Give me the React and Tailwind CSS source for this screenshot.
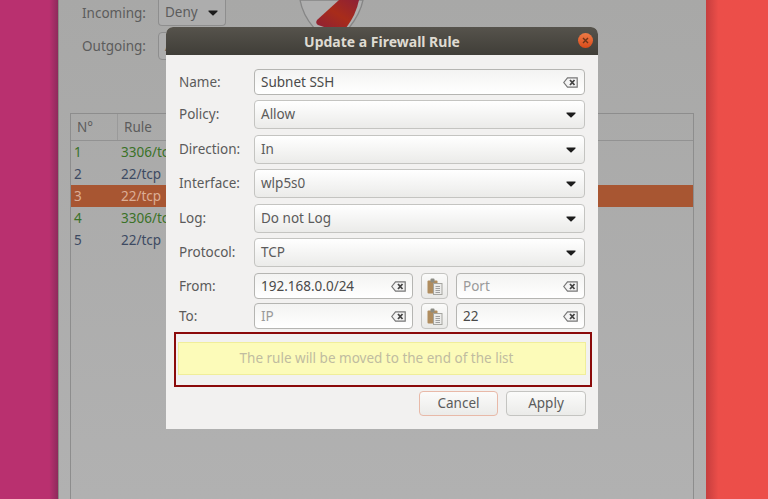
import React from 'react';

const rules = [
  { id: 1, rule: '3306/tcp', color: 'text-[#3a7228]' },
  { id: 2, rule: '22/tcp', color: 'text-[#3d4a62]' },
  { id: 3, rule: '22/tcp', color: 'text-[#dcae96]', active: true },
  { id: 4, rule: '3306/tcp', color: 'text-[#3a7228]' },
  { id: 5, rule: '22/tcp', color: 'text-[#3d4a62]' },
];

const ClearIcon = () => (
  <svg width="15" height="11" viewBox="0 0 15 11" className="shrink-0">
    <path d="M4.5 0.8H14.2V10.2H4.5L0.8 5.5Z" fill="#f4f4f4" stroke="#777" strokeWidth="1.2" />
    <path d="M7 3L11.5 8M11.5 3L7 8" stroke="#444" strokeWidth="1.8" />
  </svg>
);

const Arrow = () => (
  <svg width="10" height="6" viewBox="0 0 10 6" className="shrink-0">
    <path d="M0.5 0.5H9.5V1.5L5 5.8L0.5 1.5Z" fill="#1c1c1c" />
  </svg>
);

const ClipboardIcon = () => (
  <svg width="16" height="17" viewBox="0 0 16 17">
    <rect x="0.5" y="2.5" width="10" height="13" rx="1" fill="#b08d5f" />
    <rect x="3.5" y="0.5" width="4" height="4" rx="1" fill="#8d8d84" />
    <rect x="6.5" y="5.5" width="8.5" height="11" fill="#ececea" stroke="#a5a5a0" />
    <path d="M8.5 8.5H13M8.5 10.5H13M8.5 12.5H13M8.5 14.5H13" stroke="#a0a0a0" />
  </svg>
);

const Label = ({ children }) => (
  <div className="w-[75px] shrink-0 text-[#5b5b5b]">{children}</div>
);

const Entry = ({ value, placeholder, className }) => (
  <div className={`flex h-[26px] items-center justify-between rounded-[4px] border border-[#b5b5b2] bg-gradient-to-b from-[#f3f3f2] to-white pl-[6px] pr-[6px] ${className}`}>
    <span className={value ? 'text-[#4a4a4a]' : 'text-[#9a9a9a]'}>{value || placeholder}</span>
    <ClearIcon />
  </div>
);

const Combo = ({ value }) => (
  <div className="flex h-[29px] flex-1 items-center justify-between rounded-[4px] border border-[#c4c4c1] bg-gradient-to-b from-white to-[#ebebe9] pl-[6px] pr-[8px] text-[#5b5b5b]">
    <span>{value}</span>
    <Arrow />
  </div>
);

const PasteButton = () => (
  <div className="mx-[8px] flex h-[26px] w-[27px] shrink-0 items-center justify-center rounded-[4px] border border-[#c4c4c1] bg-gradient-to-b from-[#fbfbfa] to-[#e9e9e7]">
    <ClipboardIcon />
  </div>
);

const Dialog = () => (
  <div className="absolute left-[166px] top-[27px] h-[402px] w-[432px] overflow-hidden rounded-t-[7px] bg-[#f2f1f0] text-[13.5px]">
    <div className="relative flex h-[28px] items-center justify-center bg-gradient-to-b from-[#56534c] to-[#403e38]">
      <span className="text-[14px] font-bold text-[#dfdbd2]">Update a Firewall Rule</span>
      <div className="absolute right-[5px] top-[6px] flex h-[15px] w-[15px] items-center justify-center rounded-full bg-gradient-to-b from-[#ee7a45] to-[#d94a18]">
        <svg width="7" height="7" viewBox="0 0 7 7">
          <path d="M1 1L6 6M6 1L1 6" stroke="#6e3418" strokeWidth="1.4" />
        </svg>
      </div>
    </div>

    <div className="pl-[13px] pr-[13px] pt-[14px]">
      <div className="flex items-center">
        <Label>Name:</Label>
        <Entry value="Subnet SSH" className="flex-1" />
      </div>
      <div className="mt-[5px] flex items-center">
        <Label>Policy:</Label>
        <Combo value="Allow" />
      </div>
      <div className="mt-[6px] flex items-center">
        <Label>Direction:</Label>
        <Combo value="In" />
      </div>
      <div className="mt-[5px] flex items-center">
        <Label>Interface:</Label>
        <Combo value="wlp5s0" />
      </div>
      <div className="mt-[6px] flex items-center">
        <Label>Log:</Label>
        <Combo value="Do not Log" />
      </div>
      <div className="mt-[5px] flex items-center">
        <Label>Protocol:</Label>
        <Combo value="TCP" />
      </div>
      <div className="mt-[6px] flex items-center">
        <Label>From:</Label>
        <Entry value="192.168.0.0/24" className="w-[159px]" />
        <PasteButton />
        <Entry placeholder="Port" className="flex-1" />
      </div>
      <div className="mt-[4px] flex items-center">
        <Label>To:</Label>
        <Entry placeholder="IP" className="w-[159px]" />
        <PasteButton />
        <Entry value="22" className="flex-1" />
      </div>
    </div>

    <div className="ml-[8px] mr-[6px] mt-[3px] h-[55px] border-2 border-[#8b0a0a] pl-[2px] pr-[4px] pt-[8px]">
      <div className="flex h-[33px] items-center justify-center border border-[#f0ee9a] bg-[#fcfbb9] pr-[11px] text-[#c0bca0]">
        The rule will be moved to the end of the list
      </div>
    </div>

    <div className="mr-[12px] mt-[4px] flex justify-end gap-[8px]">
      <div className="flex h-[25px] w-[79px] items-center justify-center rounded-[4px] border border-[#e8b9a8] bg-gradient-to-b from-[#fbfbfa] to-[#ebebe9] text-[#5b5b5b]">Cancel</div>
      <div className="flex h-[25px] w-[80px] items-center justify-center rounded-[4px] border border-[#c4c4c1] bg-gradient-to-b from-[#fbfbfa] to-[#ebebe9] text-[#5b5b5b]">Apply</div>
    </div>
  </div>
);

export default function App() {
  return (
    <div className="relative flex h-[499px] w-[768px] overflow-hidden font-['Noto_Sans',sans-serif] text-[13.5px]">
      <div className="w-[58px] shrink-0 bg-gradient-to-r from-[#b9306f] from-[85%] to-[#8e2a5c]" />

      <div className="flex-1 border-l border-[#8b8b85] bg-gradient-to-b from-[#a8a8a7] to-[#b1b1b1]">
        <div className="flex h-[113px]">
          <div className="w-[240px] shrink-0 pl-[23px] text-[#5c5c5c]">
            <div className="flex h-[26px] items-center">
              <span className="w-[76px]">Incoming:</span>
              <div className="flex h-[26px] w-[68px] items-center justify-between rounded-b-[4px] border-x border-b border-[#8e8e8e] bg-[#adadad] pl-[6px] pr-[7px]">
                <span>Deny</span>
                <Arrow />
              </div>
            </div>
            <div className="mt-[6px] flex h-[28px] items-center">
              <span className="w-[76px]">Outgoing:</span>
              <div className="flex h-[28px] w-[68px] items-center rounded-[4px] border border-[#8e8e8e] bg-[#adadad] pl-[6px]">
                <span>Allow</span>
              </div>
            </div>
          </div>
          <svg width="66" height="28" viewBox="0 0 66 28" className="shrink-0">
            <defs>
              <linearGradient id="shieldRed" x1="0" y1="1" x2="1" y2="0">
                <stop offset="0" stopColor="#8e2036" />
                <stop offset="0.5" stopColor="#a82c1a" />
                <stop offset="1" stopColor="#8e2036" />
              </linearGradient>
            </defs>
            <path d="M1 0C3 11 8 20 15 28H50C57 19 62 10 64 0Z" fill="#afafaf" stroke="#868686" strokeWidth="1.3" />
            <path d="M40 0L18 20Q16 23 19 25L28 28H47Q57 15 60 0Z" fill="url(#shieldRed)" />
          </svg>
        </div>

        <div className="ml-[11px] mr-[12px] h-[400px] border border-[#8d8d8d]">
          <div className="flex h-[27px] items-center border-b border-[#929292] text-[#5c5c5c]">
            <div className="flex h-full w-[47px] items-center border-r border-[#9a9a9a] pl-[6px]">N°</div>
            <div className="pl-[6px]">Rule</div>
          </div>
          {rules.map((r) => (
            <div key={r.id} className={`flex h-[22px] items-center ${r.color} ${r.active ? 'bg-[#a85632]' : ''}`}>
              <div className="w-[50px] pl-[3px]">{r.id}</div>
              <div>{r.rule}</div>
            </div>
          ))}
        </div>
      </div>

      <div className="w-[62px] shrink-0 bg-gradient-to-r from-[#c63e3e] to-[#ec4e49] to-[20%]" />

      <Dialog />
    </div>
  );
}
